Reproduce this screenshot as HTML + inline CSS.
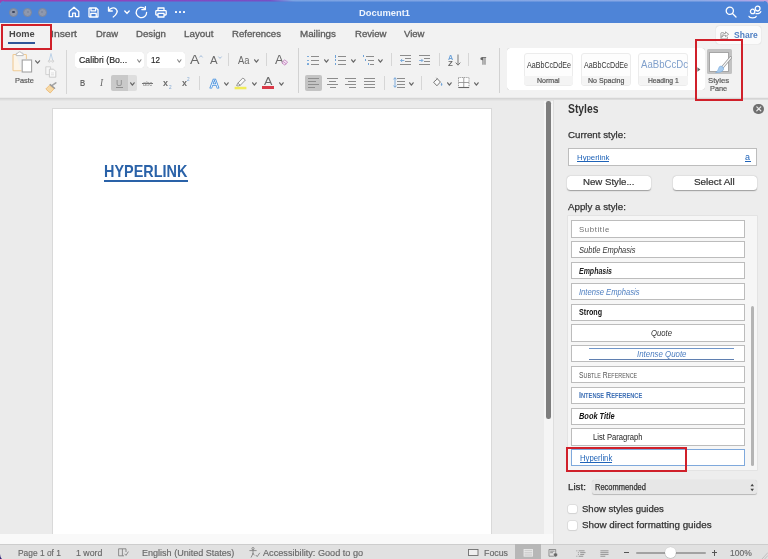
<!DOCTYPE html>
<html><head><meta charset="utf-8"><title>Document1</title>
<style>
html,body{margin:0;padding:0}
body{width:768px;height:559px;overflow:hidden;position:relative;background:#4a1d6e;font-family:"Liberation Sans",sans-serif}
.t{position:absolute;white-space:nowrap;line-height:1;transform-origin:0 50%}
.b{position:absolute;box-sizing:border-box}
svg{position:absolute;overflow:visible}
#app{position:absolute;left:0;top:0;width:768px;height:559px;will-change:transform}
</style></head><body><div id="app">
<div class="b" style="left:0px;top:0px;width:768px;height:6px;background:linear-gradient(90deg,#a040b0 0,#8846c0 150px,#7650c4 270px,#7aa2e2 292px,#8daae6 700px,#a9a6e6 745px,#caa0d8 768px);"></div>
<div class="b" style="left:0px;top:545px;width:10px;height:14px;background:#2f2478;"></div>
<div class="b" style="left:0;top:1.5px;width:768px;height:543px;background:#f2f2f2;border-radius:4px 4px 0 0;overflow:hidden">
</div>
<div class="b" style="left:0px;top:1px;width:768px;height:22px;background:#4e84d7;border-radius:4px 4px 0 0"></div>
<div class="b" style="left:4px;top:1px;width:760px;height:1px;background:linear-gradient(90deg,#a040b0 0,#8846c0 150px,#7650c4 270px,#7aa2e2 292px,#8daae6 700px,#a9a6e6 745px,#caa0d8 768px);opacity:.5"></div>
<div class="b" style="left:9.0px;top:7.5px;width:9px;height:9px;background:#8f98ad;border-radius:50%;border:0.7px solid #7c869d"></div>
<div class="b" style="left:23.3px;top:7.5px;width:9px;height:9px;background:#8f98ad;border-radius:50%;border:0.7px solid #7c869d"></div>
<div class="b" style="left:37.7px;top:7.5px;width:9px;height:9px;background:#8f98ad;border-radius:50%;border:0.7px solid #7c869d"></div>
<div class="b" style="left:12.2px;top:10.7px;width:2.6px;height:2.6px;background:#3c4760;border-radius:50%"></div>
<div class="b" style="left:27px;top:11.2px;width:1.6px;height:1.6px;background:#7f89a0;border-radius:50%"></div>
<div class="b" style="left:41.4px;top:11.2px;width:1.6px;height:1.6px;background:#7f89a0;border-radius:50%"></div>
<svg style="left:68px;top:6px" width="12" height="12" viewBox="0 0 12 12"><path d="M1.2 5.6 L6 1.2 L10.8 5.6 V10.6 H7.4 V7.2 H4.6 V10.6 H1.2 Z" stroke="#fff" fill="none" stroke-width="1.3" stroke-linecap="round" stroke-linejoin="round"/></svg>
<svg style="left:88px;top:6.5px" width="11" height="11" viewBox="0 0 11 11"><path d="M1 1.6 Q1 1 1.6 1 H8.2 L10 2.8 V9.4 Q10 10 9.4 10 H1.6 Q1 10 1 9.4 Z M3 1 V3.8 H7.6 V1 M2.8 10 V6.4 H8.2 V10" stroke="#fff" fill="none" stroke-width="1.3" stroke-linecap="round" stroke-linejoin="round"/></svg>
<svg style="left:107px;top:6px" width="12" height="12" viewBox="0 0 12 12"><path d="M1.5 1.2 V5 H5.3 M1.8 4.8 C3.2 2 6.8 1 9 3 C11.2 5 10 8.4 6.2 11" stroke="#fff" fill="none" stroke-width="1.3" stroke-linecap="round" stroke-linejoin="round"/></svg>
<svg style="left:123.5px;top:10px" width="6" height="5" viewBox="0 0 6 5"><path d="M0.8 1 L3 3.4 L5.2 1" stroke="#fff" fill="none" stroke-width="1.4" stroke-linecap="round" stroke-linejoin="round"/></svg>
<svg style="left:135px;top:6px" width="13" height="13" viewBox="0 0 13 13"><path d="M9.6 2.4 A5.2 5.2 0 1 0 11.6 6.4 M6.8 3.6 H10.4 V0.6" stroke="#fff" fill="none" stroke-width="1.3" stroke-linecap="round" stroke-linejoin="round"/></svg>
<svg style="left:155px;top:6.5px" width="12" height="11" viewBox="0 0 12 11"><path d="M3 3.4 V1 H9 V3.4 M3 8 H1.6 Q0.8 8 0.8 7.2 V4.4 Q0.8 3.6 1.6 3.6 H10.4 Q11.2 3.6 11.2 4.4 V7.2 Q11.2 8 10.4 8 H9 M3 6.4 H9 V10 H3 Z" stroke="#fff" fill="none" stroke-width="1.3" stroke-linecap="round" stroke-linejoin="round"/></svg>
<div class="b" style="left:175.2px;top:11.4px;width:1.7px;height:1.7px;background:#fff;border-radius:50%"></div>
<div class="b" style="left:179.2px;top:11.4px;width:1.7px;height:1.7px;background:#fff;border-radius:50%"></div>
<div class="b" style="left:183.2px;top:11.4px;width:1.7px;height:1.7px;background:#fff;border-radius:50%"></div>
<span class="t" style="left:359.00px;top:8.65px;font-size:9.3px;color:#eef4fd;font-weight:bold;transform:scaleX(1.0071);">Document1</span>
<svg style="left:725px;top:6px" width="12" height="12" viewBox="0 0 12 12"><circle cx="4.8" cy="4.8" r="3.6" stroke="#fff" fill="none" stroke-width="1.3" stroke-linecap="round" stroke-linejoin="round"/><path d="M7.5 7.5 L11 11" stroke="#fff" fill="none" stroke-width="1.3" stroke-linecap="round" stroke-linejoin="round"/></svg>
<svg style="left:748px;top:4.5px" width="14" height="14" viewBox="0 0 14 14"><circle cx="9.6" cy="3.6" r="2.4" stroke="#fff" fill="none" stroke-width="1.3" stroke-linecap="round" stroke-linejoin="round"/><circle cx="4.6" cy="6.4" r="2.2" stroke="#fff" fill="none" stroke-width="1.3" stroke-linecap="round" stroke-linejoin="round"/><path d="M1 11.4 C1.6 13.4 7.6 13.4 8.2 11.4 M8 8.6 C10 9 12.4 8 12.8 6.6" stroke="#fff" fill="none" stroke-width="1.3" stroke-linecap="round" stroke-linejoin="round"/></svg>
<span class="t" style="left:8.50px;top:29.70px;font-size:9.2px;color:#484848;font-weight:bold;transform:scaleX(1.0094);">Home</span>
<div class="b" style="left:8px;top:41.5px;width:27px;height:2px;background:#2f5597;"></div>
<span class="t" style="left:51.00px;top:29.75px;font-size:9.1px;color:#5c5c5c;transform:scaleX(1.1424);-webkit-text-stroke:0.3px #5c5c5c;">Insert</span>
<span class="t" style="left:95.70px;top:29.75px;font-size:9.1px;color:#5c5c5c;transform:scaleX(1.0360);-webkit-text-stroke:0.3px #5c5c5c;">Draw</span>
<span class="t" style="left:135.70px;top:29.75px;font-size:9.1px;color:#5c5c5c;transform:scaleX(1.0590);-webkit-text-stroke:0.3px #5c5c5c;">Design</span>
<span class="t" style="left:183.70px;top:29.75px;font-size:9.1px;color:#5c5c5c;transform:scaleX(1.0797);-webkit-text-stroke:0.3px #5c5c5c;">Layout</span>
<span class="t" style="left:232.00px;top:29.75px;font-size:9.1px;color:#5c5c5c;transform:scaleX(1.0529);-webkit-text-stroke:0.3px #5c5c5c;">References</span>
<span class="t" style="left:300.00px;top:29.75px;font-size:9.1px;color:#5c5c5c;transform:scaleX(1.0785);-webkit-text-stroke:0.3px #5c5c5c;">Mailings</span>
<span class="t" style="left:354.50px;top:29.75px;font-size:9.1px;color:#5c5c5c;transform:scaleX(1.0557);-webkit-text-stroke:0.3px #5c5c5c;">Review</span>
<span class="t" style="left:404.00px;top:29.75px;font-size:9.1px;color:#5c5c5c;transform:scaleX(1.0480);-webkit-text-stroke:0.3px #5c5c5c;">View</span>
<div class="b" style="left:716px;top:26px;width:45px;height:17.5px;background:#fbfbfb;border-radius:3px;box-shadow:0 0 1px rgba(0,0,0,.25)"></div>
<svg style="left:720px;top:30.6px" width="9.5" height="8.6" viewBox="0 0 11 10"><path d="M6.4 1 L10 3.8 L6.4 6.6 V4.9 C4 4.9 2.8 5.8 2 7.4 C2.2 4.6 3.6 2.8 6.4 2.7 Z" stroke="#7a7a7a" fill="none" stroke-width="0.8" stroke-linejoin="round"/><path d="M4 2 H1.6 Q1 2 1 2.6 V8.6 Q1 9.2 1.6 9.2 H8 Q8.6 9.2 8.6 8.6 V7" stroke="#7a7a7a" fill="none" stroke-width="0.8" stroke-linecap="round"/></svg>
<span class="t" style="left:733.60px;top:31.00px;font-size:8.6px;color:#5080c4;font-weight:bold;transform:scaleX(0.9915);">Share</span>
<div class="b" style="left:1px;top:24px;width:50.5px;height:26px;background:transparent;border:2px solid #d0202a"></div>
<svg style="left:12px;top:51px" width="21" height="22" viewBox="0 0 21 22"><path d="M4 3.5 H1.8 Q1 3.5 1 4.3 V19 Q1 19.8 1.8 19.8 H9.5 M11.5 3.5 H13.6 Q14.4 3.5 14.4 4.3 V8" stroke="#f0cb96" fill="#fdf5e8" stroke-width="1.1"/><path d="M4.2 4.6 V3 Q4.2 2.2 5 2.2 H5.8 Q6.4 0.8 7.7 0.8 Q9 0.8 9.6 2.2 H10.4 Q11.2 2.2 11.2 3 V4.6 Z" stroke="#b4b4b4" fill="#fff" stroke-width="0.9"/><rect x="10.2" y="9" width="9.4" height="12" stroke="#a2a2a2" fill="#fff" stroke-width="1.1"/></svg>
<svg style="left:34.699999999999996px;top:60.4px" width="5.2" height="4" viewBox="0 0 5.2 4"><path d="M0.6 0.8 L2.6 3.2 L4.6000000000000005 0.8" stroke="#666" fill="none" stroke-width="1.2" stroke-linecap="round" stroke-linejoin="round"/></svg>
<span class="t" style="left:14.90px;top:77.00px;font-size:7.6px;color:#5a5a5a;transform:scaleX(0.9776);-webkit-text-stroke:0.2px #5a5a5a;">Paste</span>
<svg style="left:47.5px;top:52.5px" width="6" height="10" viewBox="0 0 6 10"><path d="M3 0.5 L1.4 7 M3 0.5 L4.6 7" stroke="#b9cfe6" fill="none" stroke-width="0.9"/><circle cx="1.3" cy="8.2" r="1" stroke="#c4c4c4" fill="none" stroke-width="0.7"/><circle cx="4.7" cy="8.2" r="1" stroke="#c4c4c4" fill="none" stroke-width="0.7"/></svg>
<svg style="left:45px;top:66px" width="12" height="12" viewBox="0 0 12 12"><path d="M0.8 0.8 H5.6 V8.6 H0.8 Z" stroke="#cfcfcf" fill="#f6f6f6" stroke-width="0.9"/><path d="M4.4 3.2 H8.6 L10.8 5.4 V11.2 H4.4 Z" stroke="#c6c6c6" fill="#fafafa" stroke-width="0.9"/><path d="M6 7 H9 M6 8.8 H9" stroke="#d5d5d5" stroke-width="0.7"/></svg>
<svg style="left:45px;top:81.5px" width="13" height="12" viewBox="0 0 13 12"><path d="M7.2 3.4 L10.8 0.8" stroke="#a5a5a5" stroke-width="1.6" stroke-linecap="round"/><path d="M4.6 3.2 L9 6.8 L5.2 11 L0.8 7 Z" fill="#f6d9a6" stroke="#edbb78" stroke-width="0.9" stroke-linejoin="round"/><path d="M5.2 2.6 L9.6 6.2" stroke="#9a9a9a" stroke-width="1.4" stroke-linecap="round"/></svg>
<div class="b" style="left:65.8px;top:50px;width:1px;height:44px;background:#d6d6d6;"></div>
<div class="b" style="left:75px;top:52px;width:69px;height:16px;background:#fff;border-radius:2.5px;box-shadow:0 0 0.5px rgba(0,0,0,.2)"></div>
<div class="b" style="left:147px;top:52px;width:37.5px;height:16px;background:#fff;border-radius:2.5px;box-shadow:0 0 0.5px rgba(0,0,0,.2)"></div>
<span class="t" style="left:78.70px;top:55.10px;font-size:9.4px;color:#2a2a2a;transform:scaleX(0.9340);-webkit-text-stroke:0.2px #2a2a2a;">Calibri (Bo...</span>
<span class="t" style="left:150.50px;top:55.10px;font-size:9.4px;color:#2a2a2a;transform:scaleX(0.8607);-webkit-text-stroke:0.2px #2a2a2a;">12</span>
<svg style="left:137.0px;top:59.0px" width="4.6" height="4" viewBox="0 0 4.6 4"><path d="M0.6 0.8 L2.3 3.2 L3.9999999999999996 0.8" stroke="#8a8a8a" fill="none" stroke-width="1.1" stroke-linecap="round" stroke-linejoin="round"/></svg>
<svg style="left:177.2px;top:59.0px" width="4.6" height="4" viewBox="0 0 4.6 4"><path d="M0.6 0.8 L2.3 3.2 L3.9999999999999996 0.8" stroke="#8a8a8a" fill="none" stroke-width="1.1" stroke-linecap="round" stroke-linejoin="round"/></svg>
<span class="t" style="left:190.00px;top:53.30px;font-size:13px;color:#6a6a6a;transform:scaleX(1.0956);">A</span>
<svg style="left:199px;top:54.5px" width="4" height="3" viewBox="0 0 4 3"><path d="M0.4 2.4 L2 0.6 L3.6 2.4" stroke="#8fb0d6" fill="none" stroke-width="0.8"/></svg>
<span class="t" style="left:210.00px;top:55.05px;font-size:10.5px;color:#6a6a6a;transform:scaleX(1.0851);">A</span>
<svg style="left:217.6px;top:55.6px" width="4" height="3" viewBox="0 0 4 3"><path d="M0.4 0.6 L2 2.4 L3.6 0.6" stroke="#8fb0d6" fill="none" stroke-width="0.8"/></svg>
<div class="b" style="left:228.2px;top:53px;width:1px;height:13px;background:#d6d6d6;"></div>
<span class="t" style="left:237.70px;top:55.80px;font-size:10px;color:#6a6a6a;transform:scaleX(0.9402);">Aa</span>
<svg style="left:253.6px;top:59.0px" width="4.8" height="4" viewBox="0 0 4.8 4"><path d="M0.6 0.8 L2.4 3.2 L4.2 0.8" stroke="#666" fill="none" stroke-width="1.2" stroke-linecap="round" stroke-linejoin="round"/></svg>
<div class="b" style="left:266.0px;top:53px;width:1px;height:13px;background:#d6d6d6;"></div>
<span class="t" style="left:275.00px;top:54.30px;font-size:12px;color:#6a6a6a;transform:scaleX(1.0744);">A</span>
<svg style="left:280.5px;top:58.5px" width="7.5" height="7" viewBox="0 0 7.5 7"><path d="M3.4 0.8 L6.6 3 L4 6.2 L0.9 4 Z M2.2 2.6 L5.2 4.8" stroke="#c78fc4" fill="#f6e6f5" stroke-width="0.9" stroke-linejoin="round"/></svg>
<div class="b" style="left:297.5px;top:48px;width:1px;height:45px;background:#d2d2d2;"></div>
<span class="t" style="left:80.00px;top:78.90px;font-size:8.8px;color:#6a6a6a;font-weight:bold;transform:scaleX(0.8182);">B</span>
<span class="t" style="left:100.00px;top:78.00px;font-size:9.6px;color:#6a6a6a;font-style:italic;transform:scaleX(0.9749);font-family:'Liberation Serif',serif;">I</span>
<div class="b" style="left:111px;top:74.7px;width:17px;height:16.6px;background:#c9c9c9;border-radius:2px 0 0 2px"></div>
<div class="b" style="left:128px;top:74.7px;width:9px;height:16.6px;background:#dedede;border-radius:0 2px 2px 0"></div>
<span class="t" style="left:116.30px;top:78.10px;font-size:9.4px;color:#8d8d8d;transform:scaleX(0.9428);">U</span>
<div class="b" style="left:115.8px;top:87.4px;width:7.4px;height:0.9px;background:#8d8d8d;"></div>
<svg style="left:130.0px;top:82.0px" width="4.8" height="4" viewBox="0 0 4.8 4"><path d="M0.6 0.8 L2.4 3.2 L4.2 0.8" stroke="#666" fill="none" stroke-width="1.2" stroke-linecap="round" stroke-linejoin="round"/></svg>
<span class="t" style="left:142.60px;top:80.55px;font-size:6.5px;color:#8a8a8a;transform:scaleX(0.8778);">abc</span>
<div class="b" style="left:141.5px;top:82.6px;width:11.2px;height:0.9px;background:#777;"></div>
<span class="t" style="left:163.30px;top:78.00px;font-size:9.6px;color:#6a6a6a;font-weight:bold;transform:scaleX(0.9365);">x</span>
<span class="t" style="left:168.60px;top:85.50px;font-size:4.6px;color:#7ea5d2;transform:scaleX(1.0163);">2</span>
<span class="t" style="left:181.60px;top:78.00px;font-size:9.6px;color:#6a6a6a;font-weight:bold;transform:scaleX(0.9365);">x</span>
<span class="t" style="left:187.00px;top:77.50px;font-size:4.6px;color:#7ea5d2;transform:scaleX(1.0163);">2</span>
<div class="b" style="left:199.0px;top:76px;width:1px;height:14px;background:#d6d6d6;"></div>
<svg style="left:207.5px;top:76.5px" width="13" height="12" viewBox="0 0 13 12"><text x="6.5" y="11" text-anchor="middle" font-family="Liberation Sans, sans-serif" font-weight="bold" font-size="13.6" fill="#f4f9ff" stroke="#4b93de" stroke-width="0.75" stroke-linejoin="round">A</text></svg>
<svg style="left:224.1px;top:82.0px" width="4.8" height="4" viewBox="0 0 4.8 4"><path d="M0.6 0.8 L2.4 3.2 L4.2 0.8" stroke="#666" fill="none" stroke-width="1.2" stroke-linecap="round" stroke-linejoin="round"/></svg>
<svg style="left:234px;top:76.5px" width="13" height="12.5" viewBox="0 0 13 12.5"><path d="M8.8 1 L11.4 3 L6.4 8.2 L3.8 6.2 Z M3.8 6.2 L2.6 8.6 L4.2 9 L6.4 8.2" stroke="#8a8a8a" fill="#fafafa" stroke-width="0.9" stroke-linejoin="round"/><rect x="0.6" y="9.8" width="11.8" height="2.5" fill="#f1ec57"/></svg>
<svg style="left:251.6px;top:82.0px" width="4.8" height="4" viewBox="0 0 4.8 4"><path d="M0.6 0.8 L2.4 3.2 L4.2 0.8" stroke="#666" fill="none" stroke-width="1.2" stroke-linecap="round" stroke-linejoin="round"/></svg>
<span class="t" style="left:263.60px;top:76.00px;font-size:10.6px;color:#6a6a6a;transform:scaleX(1.1880);">A</span>
<div class="b" style="left:262px;top:86.2px;width:12px;height:2.4px;background:#d93a48;"></div>
<svg style="left:278.6px;top:82.0px" width="4.8" height="4" viewBox="0 0 4.8 4"><path d="M0.6 0.8 L2.4 3.2 L4.2 0.8" stroke="#666" fill="none" stroke-width="1.2" stroke-linecap="round" stroke-linejoin="round"/></svg>
<div class="b" style="left:307px;top:55.6px;width:1.7px;height:1.7px;background:#6fa3d8;border-radius:50%"></div>
<div class="b" style="left:310.6px;top:55.9px;width:8.4px;height:1px;background:#8c8c8c;"></div>
<div class="b" style="left:307px;top:59.5px;width:1.7px;height:1.7px;background:#6fa3d8;border-radius:50%"></div>
<div class="b" style="left:310.6px;top:59.8px;width:8.4px;height:1px;background:#8c8c8c;"></div>
<div class="b" style="left:307px;top:63.4px;width:1.7px;height:1.7px;background:#6fa3d8;border-radius:50%"></div>
<div class="b" style="left:310.6px;top:63.699999999999996px;width:8.4px;height:1px;background:#8c8c8c;"></div>
<svg style="left:323.6px;top:59.0px" width="4.8" height="4" viewBox="0 0 4.8 4"><path d="M0.6 0.8 L2.4 3.2 L4.2 0.8" stroke="#666" fill="none" stroke-width="1.2" stroke-linecap="round" stroke-linejoin="round"/></svg>
<div class="b" style="left:334.9px;top:55.2px;width:1px;height:2.4px;background:#6fa3d8;"></div>
<div class="b" style="left:338px;top:55.9px;width:8px;height:1px;background:#8c8c8c;"></div>
<div class="b" style="left:334.9px;top:59.1px;width:1px;height:2.4px;background:#6fa3d8;"></div>
<div class="b" style="left:338px;top:59.8px;width:8px;height:1px;background:#8c8c8c;"></div>
<div class="b" style="left:334.9px;top:63.0px;width:1px;height:2.4px;background:#6fa3d8;"></div>
<div class="b" style="left:338px;top:63.699999999999996px;width:8px;height:1px;background:#8c8c8c;"></div>
<svg style="left:351.1px;top:59.0px" width="4.8" height="4" viewBox="0 0 4.8 4"><path d="M0.6 0.8 L2.4 3.2 L4.2 0.8" stroke="#666" fill="none" stroke-width="1.2" stroke-linecap="round" stroke-linejoin="round"/></svg>
<div class="b" style="left:362.8px;top:55.2px;width:1px;height:2.2px;background:#6fa3d8;"></div>
<div class="b" style="left:366px;top:55.9px;width:7.5px;height:1px;background:#8c8c8c;"></div>
<div class="b" style="left:365.2px;top:59.1px;width:1px;height:2.2px;background:#6fa3d8;"></div>
<div class="b" style="left:368px;top:59.8px;width:5.5px;height:1px;background:#8c8c8c;"></div>
<div class="b" style="left:367.6px;top:63px;width:1px;height:2.2px;background:#6fa3d8;"></div>
<div class="b" style="left:370px;top:63.7px;width:3.5px;height:1px;background:#8c8c8c;"></div>
<svg style="left:378.3px;top:59.0px" width="4.8" height="4" viewBox="0 0 4.8 4"><path d="M0.6 0.8 L2.4 3.2 L4.2 0.8" stroke="#666" fill="none" stroke-width="1.2" stroke-linecap="round" stroke-linejoin="round"/></svg>
<div class="b" style="left:390.8px;top:53px;width:1px;height:13px;background:#d6d6d6;"></div>
<div class="b" style="left:400px;top:55.2px;width:11px;height:1px;background:#8c8c8c;"></div>
<div class="b" style="left:400px;top:64px;width:11px;height:1px;background:#8c8c8c;"></div>
<div class="b" style="left:405px;top:58.1px;width:6px;height:1px;background:#8c8c8c;"></div>
<div class="b" style="left:405px;top:61px;width:6px;height:1px;background:#8c8c8c;"></div>
<svg style="left:400px;top:57.6px" width="4.5" height="5" viewBox="0 0 4.5 5"><path d="M4.3 2.5 H0.8 M2.2 0.9 L0.6 2.5 L2.2 4.1" stroke="#6fa3d8" fill="none" stroke-width="0.9"/></svg>
<div class="b" style="left:419px;top:55.2px;width:11px;height:1px;background:#8c8c8c;"></div>
<div class="b" style="left:419px;top:64px;width:11px;height:1px;background:#8c8c8c;"></div>
<div class="b" style="left:424px;top:58.1px;width:6px;height:1px;background:#8c8c8c;"></div>
<div class="b" style="left:424px;top:61px;width:6px;height:1px;background:#8c8c8c;"></div>
<svg style="left:419px;top:57.6px" width="4.5" height="5" viewBox="0 0 4.5 5"><path d="M0.2 2.5 H3.7 M2.3 0.9 L3.9 2.5 L2.3 4.1" stroke="#6fa3d8" fill="none" stroke-width="0.9"/></svg>
<div class="b" style="left:438.8px;top:53px;width:1px;height:13px;background:#d6d6d6;"></div>
<span class="t" style="left:447.80px;top:54.50px;font-size:6.6px;color:#6fa3d8;font-weight:bold;transform:scaleX(1.0910);">A</span>
<span class="t" style="left:447.80px;top:60.50px;font-size:6.6px;color:#666;font-weight:bold;transform:scaleX(1.1906);">Z</span>
<svg style="left:454.5px;top:54px" width="6" height="12" viewBox="0 0 6 12"><path d="M3 0.5 V11 M0.7 8.6 L3 11.2 L5.3 8.6" stroke="#777" fill="none" stroke-width="1"/></svg>
<div class="b" style="left:467.8px;top:53px;width:1px;height:13px;background:#d6d6d6;"></div>
<span class="t" style="left:479.60px;top:55.70px;font-size:9.2px;color:#666;font-weight:bold;transform:scaleX(1.2899);">¶</span>
<div class="b" style="left:304.7px;top:74.7px;width:17.3px;height:16.6px;background:#c4c4c4;border-radius:2px"></div>
<div class="b" style="left:307.8px;top:77.8px;width:11px;height:1.0px;background:#8e8e8e;"></div>
<div class="b" style="left:307.8px;top:80.7px;width:8px;height:1.0px;background:#8e8e8e;"></div>
<div class="b" style="left:307.8px;top:83.6px;width:11px;height:1.0px;background:#8e8e8e;"></div>
<div class="b" style="left:307.8px;top:86.5px;width:7px;height:1.0px;background:#8e8e8e;"></div>
<div class="b" style="left:327.0px;top:77.8px;width:11px;height:1.0px;background:#8c8c8c;"></div>
<div class="b" style="left:329.0px;top:80.7px;width:7px;height:1.0px;background:#8c8c8c;"></div>
<div class="b" style="left:327.0px;top:83.6px;width:11px;height:1.0px;background:#8c8c8c;"></div>
<div class="b" style="left:329.5px;top:86.5px;width:6px;height:1.0px;background:#8c8c8c;"></div>
<div class="b" style="left:345px;top:77.8px;width:11px;height:1.0px;background:#8c8c8c;"></div>
<div class="b" style="left:348px;top:80.7px;width:8px;height:1.0px;background:#8c8c8c;"></div>
<div class="b" style="left:345px;top:83.6px;width:11px;height:1.0px;background:#8c8c8c;"></div>
<div class="b" style="left:349px;top:86.5px;width:7px;height:1.0px;background:#8c8c8c;"></div>
<div class="b" style="left:363.6px;top:77.8px;width:11px;height:1.0px;background:#8c8c8c;"></div>
<div class="b" style="left:363.6px;top:80.7px;width:11px;height:1.0px;background:#8c8c8c;"></div>
<div class="b" style="left:363.6px;top:83.6px;width:11px;height:1.0px;background:#8c8c8c;"></div>
<div class="b" style="left:363.6px;top:86.5px;width:11px;height:1.0px;background:#8c8c8c;"></div>
<div class="b" style="left:383.5px;top:76px;width:1px;height:14px;background:#d6d6d6;"></div>
<svg style="left:392.5px;top:77px" width="4" height="11" viewBox="0 0 4 11"><path d="M2 0.8 V10.2 M0.5 2.4 L2 0.7 L3.5 2.4 M0.5 8.6 L2 10.3 L3.5 8.6" stroke="#6fa3d8" fill="none" stroke-width="0.9"/></svg>
<div class="b" style="left:397.4px;top:77.8px;width:7.6px;height:1.0px;background:#8c8c8c;"></div>
<div class="b" style="left:397.4px;top:80.7px;width:7.6px;height:1.0px;background:#8c8c8c;"></div>
<div class="b" style="left:397.4px;top:83.6px;width:7.6px;height:1.0px;background:#8c8c8c;"></div>
<div class="b" style="left:397.4px;top:86.5px;width:7.6px;height:1.0px;background:#8c8c8c;"></div>
<svg style="left:409.1px;top:82.0px" width="4.8" height="4" viewBox="0 0 4.8 4"><path d="M0.6 0.8 L2.4 3.2 L4.2 0.8" stroke="#666" fill="none" stroke-width="1.2" stroke-linecap="round" stroke-linejoin="round"/></svg>
<div class="b" style="left:421.0px;top:76px;width:1px;height:14px;background:#d6d6d6;"></div>
<svg style="left:432.5px;top:77px" width="10" height="11" viewBox="0 0 10 11"><path d="M3.4 0.8 L7.4 5 L3.9 8.8 L0.6 5.2 L4.4 1.8" stroke="#777" fill="#fafafa" stroke-width="1" stroke-linejoin="round"/><path d="M8.6 5.6 Q10.2 8.2 8.6 8.9 Q7 8.2 8.6 5.6Z" fill="#6fa3d8"/></svg>
<svg style="left:446.6px;top:82.0px" width="4.8" height="4" viewBox="0 0 4.8 4"><path d="M0.6 0.8 L2.4 3.2 L4.2 0.8" stroke="#666" fill="none" stroke-width="1.2" stroke-linecap="round" stroke-linejoin="round"/></svg>
<svg style="left:458px;top:77.4px" width="11.5" height="11" viewBox="0 0 11.5 11"><rect x="0.5" y="0.5" width="10.5" height="10" stroke="#8a8a8a" fill="#fcfcfc" stroke-width="0.9" stroke-dasharray="1 0.8"/><path d="M5.75 0.5 V10.5 M0.5 5.5 H11" stroke="#8a8a8a" stroke-width="0.8"/><path d="M0.5 10.5 H11" stroke="#666" stroke-width="1.1"/></svg>
<svg style="left:474.3px;top:82.0px" width="4.8" height="4" viewBox="0 0 4.8 4"><path d="M0.6 0.8 L2.4 3.2 L4.2 0.8" stroke="#666" fill="none" stroke-width="1.2" stroke-linecap="round" stroke-linejoin="round"/></svg>
<div class="b" style="left:498.8px;top:48px;width:1px;height:45px;background:#d2d2d2;"></div>
<div class="b" style="left:507px;top:48px;width:197.5px;height:42px;background:#fff;border-radius:3px;box-shadow:0 0 0.6px rgba(0,0,0,.35)"></div>
<div class="b" style="left:523.7px;top:53.4px;width:49.6px;height:32.4px;background:#fdfdfd;border-radius:3px;border:0.6px solid #ececec;overflow:hidden"></div>
<div class="b" style="left:524.3000000000001px;top:75.6px;width:48.4px;height:9.6px;background:#f4f4f4;border-radius:0 0 3px 3px"></div>
<span class="t" style="left:526.70px;top:61.70px;font-size:8.2px;color:#333;transform:scaleX(0.8696);">AaBbCcDdEe</span>
<span class="t" style="left:537.00px;top:77.20px;font-size:7.2px;color:#555;transform:scaleX(0.9783);-webkit-text-stroke:0.2px #555;">Normal</span>
<div class="b" style="left:581.3px;top:53.4px;width:49.6px;height:32.4px;background:#fdfdfd;border-radius:3px;border:0.6px solid #ececec;overflow:hidden"></div>
<div class="b" style="left:581.9px;top:75.6px;width:48.4px;height:9.6px;background:#f4f4f4;border-radius:0 0 3px 3px"></div>
<span class="t" style="left:584.00px;top:61.70px;font-size:8.2px;color:#333;transform:scaleX(0.8696);">AaBbCcDdEe</span>
<span class="t" style="left:588.00px;top:77.20px;font-size:7.2px;color:#555;transform:scaleX(0.9805);-webkit-text-stroke:0.2px #555;">No Spacing</span>
<div class="b" style="left:638.3px;top:53.4px;width:50.2px;height:32.4px;overflow:hidden;border-radius:3px">
</div>
<div class="b" style="left:638.3px;top:53.4px;width:50.2px;height:32.4px;background:#fdfdfd;border-radius:3px;border:0.6px solid #ececec;overflow:hidden"></div>
<div class="b" style="left:638.9px;top:75.6px;width:49.0px;height:9.6px;background:#f4f4f4;border-radius:0 0 3px 3px"></div>
<span class="t" style="left:640.80px;top:58.70px;font-size:11.2px;color:#7f9fcb;transform:scaleX(0.8580);">AaBbCcDc</span>
<span class="t" style="left:648.00px;top:77.20px;font-size:7.2px;color:#555;transform:scaleX(0.9383);-webkit-text-stroke:0.2px #555;">Heading 1</span>
<div class="b" style="left:688.6px;top:54px;width:6px;height:31px;background:#fff;"></div>
<svg style="left:696.6px;top:66.6px" width="4" height="5" viewBox="0 0 4 5"><path d="M0.4 0.3 L3.4 2.5 L0.4 4.7 Z" fill="#666"/></svg>
<div class="b" style="left:706.7px;top:49px;width:25.2px;height:25.2px;background:#c2c2c2;border-radius:1.5px"></div>
<div class="b" style="left:709.2px;top:51.5px;width:20.2px;height:20.2px;background:#fff;border:1px solid #a6a6a6"></div>
<svg style="left:713px;top:56px" width="19" height="18" viewBox="0 0 19 18"><path d="M17.6 1.6 L9.2 11.6" stroke="#9a9a9a" stroke-width="2.8" stroke-linecap="round"/><path d="M17.6 1.6 L9.2 11.6" stroke="#fafafa" stroke-width="1.3" stroke-linecap="round"/><path d="M8 10 Q11 10.8 10.6 13.4 Q9.4 16.6 2.6 16.6 Q5.4 14.6 5.6 12.4 Q6 10.2 8 10Z" fill="#a7cbee" stroke="#74a8dc" stroke-width="0.6"/></svg>
<span class="t" style="left:707.80px;top:77.05px;font-size:7.5px;color:#5a5a5a;transform:scaleX(1.0380);-webkit-text-stroke:0.2px #5a5a5a;">Styles</span>
<span class="t" style="left:710.00px;top:85.05px;font-size:7.5px;color:#5a5a5a;transform:scaleX(0.9819);-webkit-text-stroke:0.2px #5a5a5a;">Pane</span>
<div class="b" style="left:0px;top:98px;width:553px;height:446px;background:#ebebeb;"></div>
<div class="b" style="left:52px;top:108px;width:440px;height:426px;background:#fff;border:1px solid #d9d9d9;border-bottom:none"></div>
<div class="b" style="left:544px;top:98px;width:9px;height:446px;background:#f5f5f5;"></div>
<div class="b" style="left:0px;top:534px;width:553px;height:10px;background:#f9f9f9;"></div>
<div class="b" style="left:546.4px;top:101.4px;width:4.4px;height:318px;background:#7d7d7d;border-radius:2.2px"></div>
<span class="t" style="left:103.90px;top:163.85px;font-size:15.9px;color:#2a62a8;font-weight:bold;transform:scaleX(0.9077);">HYPERLINK</span>
<div class="b" style="left:104.4px;top:180px;width:83.2px;height:1.5px;background:#2a62a8;"></div>
<div class="b" style="left:553px;top:99px;width:215px;height:445px;background:#ededed;"></div>
<div class="b" style="left:553px;top:99px;width:1px;height:445px;background:#dedede;"></div>
<span class="t" style="left:567.50px;top:103.30px;font-size:12px;color:#333;font-weight:bold;transform:scaleX(0.8626);">Styles</span>
<div class="b" style="left:753.4px;top:103.9px;width:10.2px;height:10.2px;background:#6f6f6f;border-radius:50%"></div>
<svg style="left:755.7px;top:106.2px" width="5.6" height="5.6" viewBox="0 0 5.6 5.6"><path d="M0.8 0.8 L4.8 4.8 M4.8 0.8 L0.8 4.8" stroke="#e8e8e8" stroke-width="1.2" stroke-linecap="round"/></svg>
<span class="t" style="left:567.50px;top:130.10px;font-size:9.4px;color:#333;transform:scaleX(1.0376);-webkit-text-stroke:0.25px #333;">Current style:</span>
<div class="b" style="left:568px;top:148.3px;width:189px;height:17.6px;background:#fff;border:0.8px solid #bdbdbd"></div>
<span class="t" style="left:576.50px;top:153.80px;font-size:8px;color:#1f63b8;transform:scaleX(0.9747);">Hyperlink</span>
<div class="b" style="left:576.5px;top:160.6px;width:32.5px;height:0.8px;background:#1f63b8;"></div>
<span class="t" style="left:745.40px;top:152.10px;font-size:9.4px;color:#1f63b8;transform:scaleX(0.9564);">a</span>
<div class="b" style="left:745px;top:161.4px;width:6px;height:0.8px;background:#1f63b8;"></div>
<div class="b" style="left:566.8px;top:176.2px;width:84.5px;height:13.4px;background:#fff;border-radius:3.5px;box-shadow:0 0.4px 1.2px rgba(0,0,0,.35)"></div>
<span class="t" style="left:583.00px;top:177.70px;font-size:9.2px;color:#333;transform:scaleX(1.0493);-webkit-text-stroke:0.2px #333;">New Style...</span>
<div class="b" style="left:672.6px;top:176.2px;width:84px;height:13.4px;background:#fff;border-radius:3.5px;box-shadow:0 0.4px 1.2px rgba(0,0,0,.35)"></div>
<span class="t" style="left:693.70px;top:177.70px;font-size:9.2px;color:#333;transform:scaleX(1.0781);-webkit-text-stroke:0.2px #333;">Select All</span>
<span class="t" style="left:567.50px;top:202.10px;font-size:9.4px;color:#333;transform:scaleX(1.0375);-webkit-text-stroke:0.25px #333;">Apply a style:</span>
<div class="b" style="left:567.5px;top:216.4px;width:189px;height:253.6px;background:#f6f6f6;box-shadow:0 0 0 0.6px #dcdcdc"></div>
<div class="b" style="left:571px;top:220.3px;width:174px;height:17.3px;background:#fff;border:0.8px solid #bcbcbc"></div>
<span class="t" style="left:579.30px;top:226.10px;font-size:7.4px;color:#707070;letter-spacing:0.6px;transform:scaleX(1.0515);">Subtitle</span>
<div class="b" style="left:571px;top:241.1px;width:174px;height:17.3px;background:#fff;border:0.8px solid #bcbcbc"></div>
<span class="t" style="left:579.30px;top:246.05px;font-size:8.5px;color:#333;font-style:italic;transform:scaleX(0.8858);">Subtle Emphasis</span>
<div class="b" style="left:571px;top:261.9px;width:174px;height:17.3px;background:#fff;border:0.8px solid #bcbcbc"></div>
<span class="t" style="left:579.30px;top:267.05px;font-size:8.5px;color:#222;font-weight:bold;font-style:italic;transform:scaleX(0.8218);">Emphasis</span>
<div class="b" style="left:571px;top:282.7px;width:174px;height:17.3px;background:#fff;border:0.8px solid #bcbcbc"></div>
<span class="t" style="left:579.30px;top:288.05px;font-size:8.5px;color:#4d7ec0;font-style:italic;transform:scaleX(0.8954);">Intense Emphasis</span>
<div class="b" style="left:571px;top:303.5px;width:174px;height:17.3px;background:#fff;border:0.8px solid #bcbcbc"></div>
<span class="t" style="left:579.30px;top:308.05px;font-size:8.5px;color:#111;font-weight:bold;transform:scaleX(0.8399);">Strong</span>
<div class="b" style="left:571px;top:324.3px;width:174px;height:17.3px;background:#fff;border:0.8px solid #bcbcbc"></div>
<span class="t" style="left:650.70px;top:329.05px;font-size:8.5px;color:#333;font-style:italic;transform:scaleX(0.9069);">Quote</span>
<div class="b" style="left:571px;top:345.1px;width:174px;height:17.3px;background:#fff;border:0.8px solid #bcbcbc"></div>
<div class="b" style="left:589px;top:348px;width:145px;height:0.8px;background:#6f95c8;"></div>
<div class="b" style="left:589px;top:359px;width:145px;height:0.8px;background:#5f7fb0;"></div>
<span class="t" style="left:636.50px;top:350.05px;font-size:8.5px;color:#4d7ec0;font-style:italic;transform:scaleX(0.9270);">Intense Quote</span>
<div class="b" style="left:571px;top:365.9px;width:174px;height:17.3px;background:#fff;border:0.8px solid #bcbcbc"></div>
<span class="t" style="left:579.30px;top:371.05px;font-size:8.5px;color:#555;transform:scaleX(0.7960);">S<span style="font-size:6.8px">UBTLE</span> R<span style="font-size:6.8px">EFERENCE</span></span>
<div class="b" style="left:571px;top:386.7px;width:174px;height:17.3px;background:#fff;border:0.8px solid #bcbcbc"></div>
<span class="t" style="left:579.30px;top:391.05px;font-size:8.5px;color:#3d6fb5;font-weight:bold;transform:scaleX(0.8387);">I<span style="font-size:6.8px">NTENSE</span> R<span style="font-size:6.8px">EFERENCE</span></span>
<div class="b" style="left:571px;top:407.5px;width:174px;height:17.3px;background:#fff;border:0.8px solid #bcbcbc"></div>
<span class="t" style="left:579.30px;top:412.05px;font-size:8.5px;color:#111;font-weight:bold;font-style:italic;transform:scaleX(0.8722);">Book Title</span>
<div class="b" style="left:571px;top:428.3px;width:174px;height:17.3px;background:#fff;border:0.8px solid #bcbcbc"></div>
<span class="t" style="left:592.60px;top:433.05px;font-size:8.5px;color:#222;transform:scaleX(0.8935);">List Paragraph</span>
<div class="b" style="left:571px;top:449.1px;width:174px;height:17.3px;background:#fff;border:0.8px solid #7fa9dc"></div>
<span class="t" style="left:579.70px;top:454.05px;font-size:8.5px;color:#1f63b8;transform:scaleX(0.9117);">Hyperlink</span>
<div class="b" style="left:579.7px;top:461.9px;width:32.3px;height:0.8px;background:#1f63b8;"></div>
<div class="b" style="left:750.6px;top:305.6px;width:3.2px;height:160.4px;background:#b4b4b4;border-radius:1.6px"></div>
<div class="b" style="left:566.2px;top:447.3px;width:121px;height:24.5px;background:transparent;border:2px solid #d0202a"></div>
<span class="t" style="left:567.50px;top:482.10px;font-size:9.4px;color:#333;transform:scaleX(1.0441);-webkit-text-stroke:0.25px #333;">List:</span>
<div class="b" style="left:591.5px;top:480px;width:165.5px;height:14px;background:#e7e7e7;border-radius:2.5px;box-shadow:0 0.3px 0.8px rgba(0,0,0,.22)"></div>
<span class="t" style="left:594.80px;top:483.70px;font-size:8.2px;color:#333;transform:scaleX(0.9171);-webkit-text-stroke:0.25px #333;">Recommended</span>
<svg style="left:749.5px;top:482.6px" width="4.4" height="9" viewBox="0 0 4.4 9"><path d="M0.4 3.2 L2.2 0.8 L4 3.2 Z M0.4 5.8 L2.2 8.2 L4 5.8 Z" fill="#444"/></svg>
<div class="b" style="left:568px;top:504.8px;width:8.6px;height:8.6px;background:#fff;border-radius:2px;box-shadow:0 0 0 0.6px #d2d2d2, 0 0.5px 1px rgba(0,0,0,.1)"></div>
<span class="t" style="left:581.90px;top:504.10px;font-size:9.4px;color:#333;transform:scaleX(1.0191);-webkit-text-stroke:0.25px #333;">Show styles guides</span>
<div class="b" style="left:568px;top:521px;width:8.6px;height:8.6px;background:#fff;border-radius:2px;box-shadow:0 0 0 0.6px #d2d2d2, 0 0.5px 1px rgba(0,0,0,.1)"></div>
<span class="t" style="left:581.90px;top:520.10px;font-size:9.4px;color:#333;transform:scaleX(1.0498);-webkit-text-stroke:0.25px #333;">Show direct formatting guides</span>
<div class="b" style="left:0px;top:544px;width:768px;height:17.5px;background:#e1e1e1;border-radius:0 0 0 8px"></div>
<div class="b" style="left:0px;top:544px;width:768px;height:1px;background:#cdcdcd;"></div>
<span class="t" style="left:17.80px;top:548.95px;font-size:8.7px;color:#686868;transform:scaleX(0.9662);-webkit-text-stroke:0.15px #686868;">Page 1 of 1</span>
<span class="t" style="left:76.00px;top:548.95px;font-size:8.7px;color:#686868;transform:scaleX(1.0148);-webkit-text-stroke:0.15px #686868;">1 word</span>
<svg style="left:117.5px;top:547.5px" width="11" height="9" viewBox="0 0 11 9"><path d="M0.6 0.8 H4.4 V7.8 H0.6 Z M4.4 0.8 H8 V4 M4.4 7.8 H6" stroke="#777" fill="none" stroke-width="0.8"/><path d="M6.6 5.8 L8 7.4 L10.4 3.6" stroke="#777" fill="none" stroke-width="0.8"/></svg>
<span class="t" style="left:142.00px;top:548.95px;font-size:8.7px;color:#686868;transform:scaleX(1.0396);-webkit-text-stroke:0.15px #686868;">English (United States)</span>
<svg style="left:249px;top:546.6px" width="11.5" height="11" viewBox="0 0 11.5 11"><circle cx="4" cy="1.6" r="1.1" stroke="#777" fill="none" stroke-width="0.8"/><path d="M0.8 3.6 H7.2 M4 3.6 V6.6 M4 6.6 L2.2 10.2 M4 6.6 L5.2 8" stroke="#777" fill="none" stroke-width="0.8" stroke-linecap="round"/><path d="M6.8 8 L8.2 9.6 L10.8 5.8" stroke="#777" fill="none" stroke-width="0.8"/></svg>
<span class="t" style="left:262.70px;top:548.95px;font-size:8.7px;color:#686868;transform:scaleX(1.0529);-webkit-text-stroke:0.15px #686868;">Accessibility: Good to go</span>
<svg style="left:467.5px;top:549.3px" width="10.5" height="7" viewBox="0 0 10.5 7"><rect x="0.5" y="0.5" width="9.5" height="6" stroke="#6e6e6e" fill="#efefef" stroke-width="0.9"/></svg>
<span class="t" style="left:483.50px;top:548.95px;font-size:8.7px;color:#686868;transform:scaleX(1.0130);-webkit-text-stroke:0.15px #686868;">Focus</span>
<div class="b" style="left:515px;top:544px;width:26px;height:15px;background:#b7b7b7;"></div>
<svg style="left:522.5px;top:549px" width="10.5" height="7.6" viewBox="0 0 11 9"><rect x="0.5" y="0.5" width="10" height="8" stroke="#ededed" fill="#cfcfcf" stroke-width="1"/><path d="M0.5 3 H10.5 M0.5 5.8 H10.5" stroke="#ededed" stroke-width="0.9"/></svg>
<svg style="left:548px;top:549px" width="10.6" height="8.4" viewBox="0 0 11.5 10"><path d="M0.6 0.6 H8.6 V8.6 H0.6 Z M2 2.6 H7.2 M2 4.4 H5.4" stroke="#777" fill="none" stroke-width="0.9"/><circle cx="8.4" cy="7" r="2.4" fill="#666" stroke="#e1e1e1" stroke-width="0.6"/></svg>
<svg style="left:575.5px;top:549.6px" width="10" height="7" viewBox="0 0 10.5 8.5" preserveAspectRatio="none"><path d="M0.4 1 H1.4 M2.8 1 H9 M2 3.2 H3 M4.4 3.2 H10 M2 5.4 H3 M4.4 5.4 H8.6 M0.4 7.6 H1.4 M2.8 7.6 H7.6" stroke="#858585" stroke-width="0.9"/></svg>
<svg style="left:600px;top:549.6px" width="9" height="7" viewBox="0 0 9.5 8.5" preserveAspectRatio="none"><path d="M0.4 1 H9 M0.4 3.2 H9 M0.4 5.4 H9 M0.4 7.6 H5.6" stroke="#858585" stroke-width="0.9"/></svg>
<div class="b" style="left:624px;top:552.2px;width:5px;height:1.3px;background:#555;"></div>
<div class="b" style="left:635.5px;top:552px;width:70.5px;height:2px;background:#a2a2a2;border-radius:1px"></div>
<div class="b" style="left:665px;top:547.4px;width:11px;height:11px;background:#fff;border-radius:50%;box-shadow:0 0.3px 1px rgba(0,0,0,.4)"></div>
<div class="b" style="left:711.5px;top:552.2px;width:5.6px;height:1.3px;background:#555;"></div>
<div class="b" style="left:713.65px;top:550px;width:1.3px;height:5.6px;background:#555;"></div>
<span class="t" style="left:729.70px;top:548.95px;font-size:8.7px;color:#686868;transform:scaleX(0.9797);-webkit-text-stroke:0.15px #686868;">100%</span>
<svg style="left:761px;top:551px" width="7" height="8" viewBox="0 0 7 8"><path d="M1 8 L7 1.5 M3.6 8 L7 4.4" stroke="#bcbcbc" stroke-width="0.9"/></svg>
<div class="b" style="left:0px;top:97px;width:768px;height:1px;background:#ebebeb;"></div>
<div class="b" style="left:0px;top:98px;width:768px;height:1px;background:#d5d5d5;"></div>
<div class="b" style="left:0px;top:99px;width:768px;height:1px;background:#dddddd;"></div>
<div class="b" style="left:0px;top:100px;width:553px;height:1px;background:#e5e5e5;"></div>
<div class="b" style="left:695px;top:39.3px;width:47.7px;height:61.3px;background:transparent;border:2px solid #d0202a"></div>
</div></body></html>
